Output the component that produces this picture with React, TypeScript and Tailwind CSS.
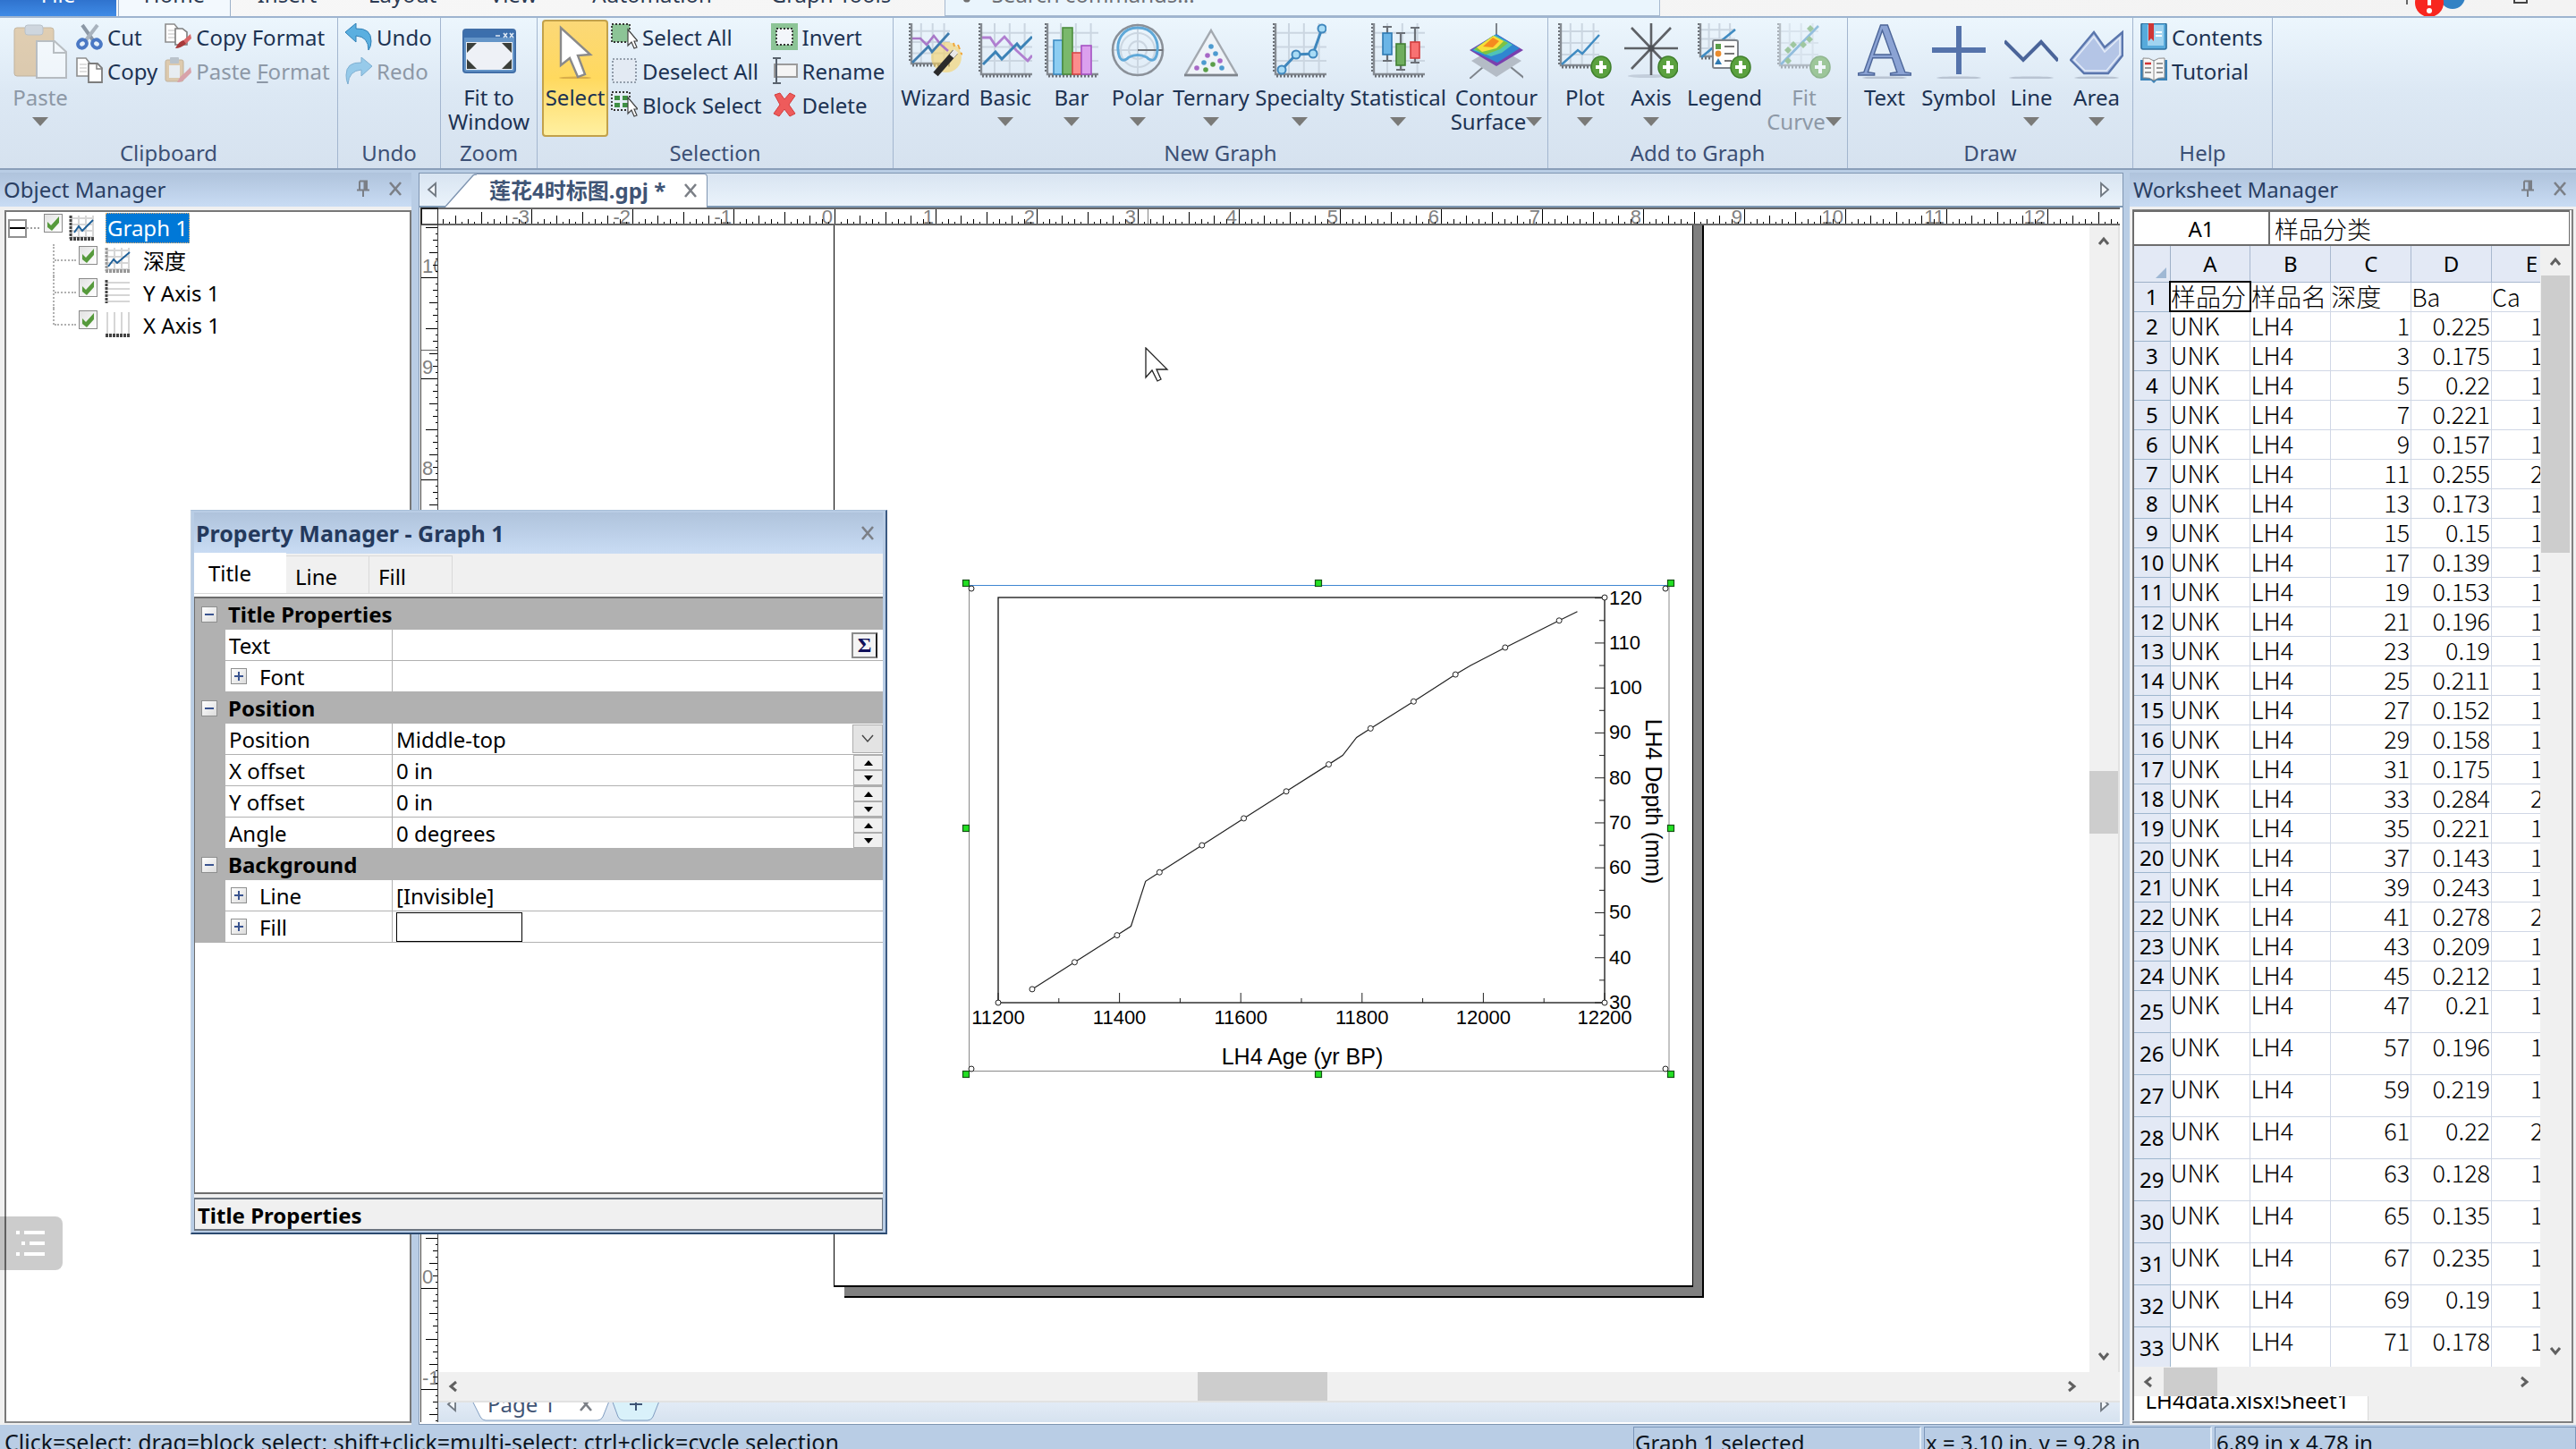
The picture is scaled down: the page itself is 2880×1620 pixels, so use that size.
import { useState, type ReactNode } from 'react';

/* ---------- data ---------- */

const menuTabs = [
  { name: 'Home', width: 'w-[126px]' },
  { name: 'Insert', width: 'w-[126px]' },
  { name: 'Layout', width: 'w-[132px]' },
  { name: 'View', width: 'w-[116px]' },
  { name: 'Automation', width: 'w-[194px]' },
  { name: 'Graph Tools', width: 'w-[206px]' },
];

// [depth, Ba, leading digit of Ca]
const samples: [string, string, string][] = [
  ['1', '0.225', '1'], ['3', '0.175', '1'], ['5', '0.22', '1'], ['7', '0.221', '1'],
  ['9', '0.157', '1'], ['11', '0.255', '2'], ['13', '0.173', '1'], ['15', '0.15', '1'],
  ['17', '0.139', '1'], ['19', '0.153', '1'], ['21', '0.196', '1'], ['23', '0.19', '1'],
  ['25', '0.211', '1'], ['27', '0.152', '1'], ['29', '0.158', '1'], ['31', '0.175', '1'],
  ['33', '0.284', '2'], ['35', '0.221', '1'], ['37', '0.143', '1'], ['39', '0.243', '1'],
  ['41', '0.278', '2'], ['43', '0.209', '1'], ['45', '0.212', '1'], ['47', '0.21', '1'],
  ['57', '0.196', '1'], ['59', '0.219', '1'], ['61', '0.22', '2'], ['63', '0.128', '1'],
  ['65', '0.135', '1'], ['67', '0.235', '1'], ['69', '0.19', '1'], ['71', '0.178', '1'],
];

// [age, depth, has marker]
const curve: [number, number, boolean][] = [
  [11256, 33, true], [11326, 39, true], [11396, 45, true], [11419, 47, false],
  [11443, 57, false], [11466, 59, true], [11536, 65, true], [11605, 71, true],
  [11675, 77, true], [11745, 83, true], [11768, 85, false], [11791, 89, false],
  [11814, 91, true], [11885, 97, true], [11954, 103, true], [11979, 105, false],
  [12036, 109, true], [12125, 115, true], [12155, 117, false],
];

/* ---------- small shared glyphs ---------- */

const CloseGlyph = () => (
  <svg width="16" height="16" viewBox="0 0 16 16">
    <path d="M2 1 L14 15 M14 1 L2 15" stroke="#7b7f86" strokeWidth="2.6" fill="none" />
  </svg>
);

const PinGlyph = () => (
  <svg width="16" height="20" viewBox="0 0 16 20">
    <path d="M4 1.5 H12 V11 M4 1.5 V11 M1 11.5 H15 M8 12 V19" stroke="#7b7f86" strokeWidth="2" fill="none" />
    <path d="M10 2 V11" stroke="#7b7f86" strokeWidth="3" />
  </svg>
);

const chevrons = {
  up: 'M3 11 L8 5 L13 11',
  down: 'M3 5 L8 11 L13 5',
  left: 'M11 3 L5 8 L11 13',
  right: 'M5 3 L11 8 L5 13',
};

const Chevron = ({ dir }: { dir: keyof typeof chevrons }) => (
  <svg width="16" height="16" viewBox="0 0 16 16">
    <path d={chevrons[dir]} stroke="#606060" strokeWidth="3" fill="none" />
  </svg>
);

const Triangle = ({ dir }: { dir: 'left' | 'right' }) => (
  <svg width="12" height="18" viewBox="0 0 12 18">
    <path d={dir === 'left' ? 'M10 2 V16 L2 9 Z' : 'M2 2 V16 L10 9 Z'} fill="#f4f8fc" stroke="#6f7780" strokeWidth="1.8" />
  </svg>
);

const DropArrow = () => (
  <svg width="18" height="10" viewBox="0 0 18 10">
    <path d="M0 0 H18 L9 10 Z" fill="#7a7a78" />
  </svg>
);

/* ---------- ribbon icons, small (30x30) ---------- */

const Small = ({ children, faded }: { children: ReactNode; faded?: boolean }) => (
  <svg width="30" height="30" viewBox="0 0 30 30" className={faded ? 'shrink-0 opacity-55' : 'shrink-0'}>
    {children}
  </svg>
);

const Sheets = () => (
  <>
    <path d="M1 1 H11 L15 6 V21 H1 Z" fill="#fff" stroke="#8d8d8d" strokeWidth="1.6" />
    <path d="M4 8 H12 M4 12 H12 M4 16 H12" stroke="#d5d5d5" strokeWidth="1.4" />
  </>
);

const CutIcon = () => (
  <Small>
    <path d="M7 2 L19 19" stroke="#8b97a5" strokeWidth="4" />
    <path d="M24 2 L11 19" stroke="#a9b3be" strokeWidth="4" />
    <ellipse cx="7" cy="23" rx="5" ry="4.5" fill="none" stroke="#4a78c4" strokeWidth="4" transform="rotate(-35 7 23)" />
    <ellipse cx="23" cy="23" rx="5" ry="4.5" fill="none" stroke="#4a78c4" strokeWidth="4" transform="rotate(35 23 23)" />
  </Small>
);

const CopyIcon = () => (
  <Small>
    <Sheets />
    <path d="M14 7 H24 L29 12 V28 H14 Z" fill="#fff" stroke="#7d7d7d" strokeWidth="1.8" />
    <path d="M23 7 V13 H29" fill="none" stroke="#7d7d7d" strokeWidth="1.4" />
  </Small>
);

const CopyFormatIcon = () => (
  <Small>
    <Sheets />
    <path d="M12 6 H20 L25 10 V24 H12 Z" fill="#fff" stroke="#7d7d7d" strokeWidth="1.6" />
    <path d="M20 20 L29 12 L30 17 L23 24 Z" fill="#d9686a" />
    <path d="M12 28 Q16 20 21 19 L24 23 Q18 28 12 28 Z" fill="#a8393a" />
  </Small>
);

const PasteFormatIcon = () => (
  <Small faded>
    <rect x="1" y="3" width="20" height="24" rx="2" fill="#d9ae74" stroke="#a88350" />
    <rect x="6" y="0" width="10" height="7" rx="1" fill="#9aa0a8" />
    <rect x="5" y="9" width="12" height="14" fill="#eee" />
    <path d="M14 28 Q18 20 22 18 L29 11 L30 17 L23 24 Q19 28 14 28 Z" fill="#d2676c" />
  </Small>
);

const UndoIcon = () => (
  <Small>
    <path d="M0 10 L12 0 V6 Q29 5 29 20 Q29 26 26 30 Q26 15 12 14 V21 Z" fill="#5aafe0" stroke="#2f7fb5" />
  </Small>
);

const RedoIcon = () => (
  <Small faded>
    <path d="M30 10 L18 0 V6 Q1 5 1 20 Q1 26 3 30 Q4 15 18 14 V21 Z" fill="#5aafe0" stroke="#2f7fb5" />
  </Small>
);

const MiniCursor = () => (
  <path d="M19 7 V25 L23 21 L26 28 L29 27 L26 20 L30 20 Z" fill="#fff" stroke="#444" strokeWidth="1.2" />
);

const SelectAllIcon = () => (
  <Small>
    <rect x="1" y="1" width="20" height="20" fill="#8cc496" stroke="#333" strokeWidth="1.8" strokeDasharray="2 2" />
    <MiniCursor />
  </Small>
);

const DeselectAllIcon = () => (
  <Small>
    <rect x="2" y="2" width="26" height="26" fill="#e3eaf3" stroke="#7b8694" strokeWidth="1.6" strokeDasharray="2 2" />
  </Small>
);

const BlockSelectIcon = () => (
  <Small>
    <rect x="1" y="1" width="20" height="20" fill="#e4ecf4" stroke="#333" strokeWidth="1.8" strokeDasharray="2 2" />
    <path d="M4 5 H10 V10 H4 Z M13 5 H19 V10 H13 Z M4 13 H10 V18 H4 Z M13 13 H19 V18 H13 Z" fill="#3f8f43" />
    <MiniCursor />
  </Small>
);

const InvertIcon = () => (
  <Small>
    <rect x="0" y="0" width="30" height="30" fill="#8cc496" />
    <rect x="6" y="6" width="18" height="18" fill="#f3f6fa" stroke="#333" strokeWidth="1.8" strokeDasharray="2 2" />
  </Small>
);

const RenameIcon = () => (
  <Small>
    <rect x="4" y="8" width="25" height="14" fill="#f4f4f4" stroke="#9b9b9b" strokeWidth="2" />
    <path d="M2 1 H11 M2 29 H11 M6 1 V29" stroke="#59626d" strokeWidth="2" />
  </Small>
);

const DeleteIcon = () => (
  <Small>
    <path d="M4 4 L10 2 L15 9 L21 2 L27 5 L20 15 L27 25 L21 28 L15 20 L9 28 L3 25 L10 15 Z" fill="#ee5b5b" stroke="#d23c3c" />
  </Small>
);

const ContentsIcon = () => (
  <Small>
    <rect x="1" y="0" width="28" height="29" rx="2" fill="#57aadb" stroke="#2c6f9e" strokeWidth="1.6" />
    <rect x="8" y="2" width="18" height="23" fill="#9fd3f0" />
    <path d="M9 0 H15 V20 L12 17 L9 20 Z" fill="#cf3535" />
    <path d="M17 10 H24 M17 14 H24" stroke="#fff" strokeWidth="1.8" />
  </Small>
);

const TutorialIcon = () => (
  <Small>
    <path d="M0 3 V26 H12 L15 29 L18 26 H30 V3 Z" fill="#3a82b8" />
    <path d="M3 1 Q10 0 15 4 Q20 0 27 1 V23 Q20 22 15 26 Q10 22 3 23 Z" fill="#f7f7f7" stroke="#8a8a8a" />
    <path d="M15 4 V26" stroke="#8a8a8a" />
    <path d="M5 7 H12" stroke="#cf3535" strokeWidth="2.5" />
    <path d="M5 12 H12 M5 17 H12 M18 7 H25 M18 12 H25 M18 17 H25" stroke="#777" strokeWidth="1.6" />
  </Small>
);

/* ---------- ribbon icons, large (60x62) ---------- */

const Large = ({ children, faded }: { children: ReactNode; faded?: boolean }) => (
  <svg width="60" height="62" viewBox="0 0 60 62" className={faded ? 'opacity-50' : ''}>
    {children}
  </svg>
);

const Axes = ({ w = 60, h = 60 }: { w?: number; h?: number }) => (
  <>
    <path
      d={`M${w * 0.3} 0 V${h - 4} M${w * 0.58} 0 V${h - 4} M${w * 0.86} 0 V${h - 4} M3 ${h * 0.18} H${w} M3 ${h * 0.44} H${w} M3 ${h * 0.7} H${w}`}
      stroke="#cbd6e1"
      strokeWidth="2"
    />
    <path d={`M3 0 V${h - 3} H${w}`} fill="none" stroke="#858b92" strokeWidth="2.4" />
    <path d={`M1 0 V${h - 4}`} stroke="#6c7178" strokeWidth="2" strokeDasharray="2 2" />
    <path d={`M4 ${h - 1} H${w}`} stroke="#6c7178" strokeWidth="3" strokeDasharray="2 2" />
  </>
);

const AddBadge = ({ x = 48, y = 49 }: { x?: number; y?: number }) => (
  <>
    <ellipse cx={x} cy={y} rx="11" ry="12" fill="#5ba13f" stroke="#3f7f2b" strokeWidth="1.5" />
    <path d={`M${x - 6} ${y} H${x + 6} M${x} ${y - 7} V${y + 7}`} stroke="#fff" strokeWidth="4" />
  </>
);

const PasteIcon = () => (
  <Large faded>
    <rect x="1" y="5" width="44" height="54" rx="3" fill="#d8a96a" stroke="#a07a48" />
    <rect x="13" y="2" width="20" height="11" rx="3" fill="#b5bac2" stroke="#8a9099" />
    <path d="M26 20 H46 L59 32 V61 H26 Z" fill="#fff" stroke="#8d8d8d" strokeWidth="2" />
    <path d="M45 20 V33 H59" fill="none" stroke="#8d8d8d" strokeWidth="2" />
  </Large>
);

const FitWindowIcon = () => (
  <Large>
    <rect x="1" y="7" width="58" height="48" rx="3" fill="#6495c8" stroke="#416fa8" strokeWidth="2" />
    <rect x="2" y="8" width="56" height="8" fill="#3c6fad" />
    <path d="M37 14 H42 M46 11 L50 16 M50 11 L46 16 M53 11 L57 16 M57 11 L53 16" stroke="#dfe9f4" strokeWidth="1.6" />
    <rect x="4" y="21" width="52" height="31" fill="#eef1f6" />
    <path d="M5 22 H16 L5 33 Z M55 22 H44 L55 33 Z M5 51 H16 L5 40 Z M55 51 H44 L55 40 Z" fill="#3b3f3a" />
  </Large>
);

const SelectIcon = () => (
  <Large>
    <ellipse cx="30" cy="61" rx="18" ry="1.5" fill="#d9ad4a" />
    <path d="M14 5 V47 L24 39 L33 60 L41 57 L33 36 L47 35 Z" fill="#fff" stroke="#8a8a8a" strokeWidth="2.4" />
  </Large>
);

const WizardIcon = () => (
  <Large>
    <Axes w={46} h={48} />
    <ellipse cx="42" cy="38" rx="17" ry="17" fill="#f6d264" opacity="0.6" />
    <path d="M4 17 H13 L20 24 L28 14 L36 24 L44 31" fill="none" stroke="#a878c8" strokeWidth="2.6" />
    <path d="M4 44 L22 26 L26 32 L45 11" fill="none" stroke="#3f7cae" strokeWidth="2.8" />
    <path d="M30 57 L52 32" stroke="#2b2b2b" strokeWidth="7" />
    <path d="M48 37 L53 31" stroke="#e8e8e8" strokeWidth="6" />
    <path d="M55 24 L57 29 M50 22 L51 26 M58 33 L60 35" stroke="#f0a63a" strokeWidth="2" />
  </Large>
);

const BasicIcon = () => (
  <Large>
    <Axes />
    <path d="M4 16 H13 L19 25 L29 15 L42 30 L55 42 L60 36" fill="none" stroke="#b07fd0" strokeWidth="2.8" />
    <path d="M5 46 L19 32 L26 40 L43 23 L47 28 L60 15" fill="none" stroke="#3b82b6" strokeWidth="3" />
  </Large>
);

const BarIcon = () => (
  <Large>
    <Axes />
    <rect x="10" y="19" width="10" height="38" fill="#8ccdf2" stroke="#3d8cc4" strokeWidth="1.6" />
    <rect x="20" y="5" width="11" height="52" fill="#7ab86c" stroke="#4b8d3d" strokeWidth="1.6" />
    <rect x="31" y="33" width="10" height="24" fill="#fb8d8d" stroke="#d84646" strokeWidth="1.6" />
    <rect x="41" y="25" width="11" height="32" fill="#dba0ee" stroke="#a552c4" strokeWidth="1.6" />
  </Large>
);

const PolarIcon = () => (
  <Large>
    <path d="M2 30 H58 M30 2 V58" stroke="#cbd6e1" strokeWidth="2" />
    <circle cx="30" cy="30" r="10" fill="none" stroke="#cbd6e1" strokeWidth="2" />
    <circle cx="30" cy="30" r="19" fill="none" stroke="#cbd6e1" strokeWidth="2" />
    <circle cx="30" cy="30" r="28" fill="none" stroke="#8a9098" strokeWidth="2.6" />
    <path d="M30 30 H58" stroke="#6c7178" strokeWidth="2" />
    <path d="M30 5 C48 5 53 20 52 30 C51 42 46 44 40 38 Q30 33 20 38 C14 44 9 42 8 30 C7 20 12 5 30 5 Z" fill="none" stroke="#5fa8d8" strokeWidth="3" />
  </Large>
);

const ternaryDots: [number, number, string][] = [
  [30, 26, '#4d9bd0'], [26, 36, '#a768c6'], [35, 34, '#4d9bd0'], [22, 44, '#4d9bd0'], [32, 46, '#5a9e48'],
  [40, 42, '#a768c6'], [14, 50, '#a768c6'], [24, 52, '#5a9e48'], [42, 50, '#4d9bd0'],
];

const TernaryIcon = () => (
  <Large>
    <path d="M30 8 L59 58 H1 Z" fill="#eef3f8" stroke="#a3a9b0" strokeWidth="2.4" />
    <path d="M0 58 H60" stroke="#7e848b" strokeWidth="2.4" />
    {ternaryDots.map(([x, y, color]) => (
      <circle key={`${x}-${y}`} cx={x} cy={y} r="2.8" fill={color} />
    ))}
  </Large>
);

const SpecialtyIcon = () => (
  <Large>
    <Axes />
    <path d="M10 52 L26 35 L45 34 L55 6" fill="none" stroke="#3f87bd" strokeWidth="3" />
    {[[10, 52], [26, 35], [45, 34], [55, 6]].map(([x, y]) => (
      <circle key={x} cx={x} cy={y} r="4.5" fill="#a9dcf6" stroke="#3f87bd" strokeWidth="2" />
    ))}
  </Large>
);

const StatisticalIcon = () => (
  <Large>
    <Axes />
    <path d="M18 4 V42 M13 4 H23 M13 42 H23 M33 11 V52 M28 11 H38 M28 52 H38 M49 5 V44 M44 5 H54 M44 44 H54" stroke="#6c7178" strokeWidth="2.2" />
    <rect x="13" y="11" width="10" height="24" fill="#6bb5e6" stroke="#2f7ab2" strokeWidth="1.6" />
    <rect x="28" y="23" width="10" height="24" fill="#6fae5e" stroke="#427f34" strokeWidth="1.6" />
    <rect x="44" y="21" width="10" height="18" fill="#f87272" stroke="#d23c3c" strokeWidth="1.6" />
  </Large>
);

const ContourIcon = () => (
  <Large>
    <path d="M30 0 V14 M30 36 L0 62 M30 36 L62 62" stroke="#7e848b" strokeWidth="2" />
    <path d="M30 26 L58 42 L30 60 L2 42 Z" fill="#b4bcc6" />
    <path d="M30 12 L60 30 L30 48 L0 30 Z" fill="#7a3fae" />
    <path d="M30 12 L56 28 L31 44 L2 30 Z" fill="#2f86d0" />
    <path d="M28 13 L48 24 L36 33 L24 37 L4 30 Z" fill="#4fc3b8" />
    <path d="M26 14 L43 22 L34 29 L18 35 L5 29 Z" fill="#7cc243" />
    <path d="M27 14 L38 20 L30 28 L14 32 L8 27 Z" fill="#f7df3a" />
    <path d="M26 16 L33 20 L26 27 L15 26 Z" fill="#f58a1f" />
  </Large>
);

const PlotIcon = () => (
  <Large>
    <Axes w={46} h={50} />
    <path d="M4 46 L22 30 L27 34 L46 13" fill="none" stroke="#3f8bc2" strokeWidth="2.4" />
    <AddBadge />
  </Large>
);

const AxisIcon = () => (
  <Large>
    <ellipse cx="26" cy="59" rx="22" ry="2" fill="#c3cedb" />
    <path d="M30 0 V58 M0 28 H60 M8 5 L52 51 M52 5 L8 51" stroke="#5e6166" strokeWidth="2.6" />
    <circle cx="30" cy="28" r="3.5" fill="#4c4f54" />
    <AddBadge x={49} />
  </Large>
);

const LegendIcon = () => (
  <Large>
    <Axes w={42} h={40} />
    <path d="M4 38 L42 7" stroke="#3f8bc2" strokeWidth="2.6" />
    <rect x="17" y="19" width="28" height="31" rx="2" fill="#fdfdfd" stroke="#7e848b" strokeWidth="2" />
    <rect x="20" y="23" width="6" height="6" fill="#5a9e48" />
    <circle cx="23" cy="34" r="3.4" fill="#ea8c2e" />
    <path d="M23 39 L27 46 H19 Z" fill="#2f7ab2" />
    <path d="M30 26 H41 M30 34 H41 M30 42 H38" stroke="#777" strokeWidth="2" />
    <AddBadge />
  </Large>
);

const FitCurveIcon = () => (
  <Large faded>
    <Axes w={46} h={50} />
    <path d="M4 46 L46 3" stroke="#3f8bc2" strokeWidth="2.6" />
    <path
      d="M12 26 l4 4 l-4 4 l-4 -4 Z M18 20 l4 4 l-4 4 l-4 -4 Z M29 20 l4 4 l-4 4 l-4 -4 Z M36 14 l4 4 l-4 4 l-4 -4 Z M12 38 l4 4 l-4 4 l-4 -4 Z M37 2 l4 4 l-4 4 l-4 -4 Z"
      fill="#5a9e48"
    />
    <AddBadge />
  </Large>
);

const IconShadow = () => <ellipse cx="30" cy="61" rx="25" ry="1.6" fill="#b9c4d2" />;

const TextIcon = () => (
  <Large>
    <IconShadow />
    <text x="30" y="58" textAnchor="middle" fontSize="84" fontFamily="Liberation Serif, serif" fill="#8ba3d4" stroke="#4d6699" strokeWidth="1.4">
      A
    </text>
  </Large>
);

const SymbolIcon = () => (
  <Large>
    <IconShadow />
    <path d="M30 3 V57 M0 30 H60" stroke="#5573ab" strokeWidth="6" />
  </Large>
);

const LineIcon = () => (
  <Large>
    <IconShadow />
    <path d="M0 20 L21 41 L41 21 L60 42" fill="none" stroke="#4a6499" strokeWidth="4" />
  </Large>
);

const AreaIcon = () => (
  <Large>
    <IconShadow />
    <path d="M1 41 L27 10 L39 27 L59 10 V36 L43 56 H16 Z" fill="#b4c5e6" stroke="#5a76ad" strokeWidth="2.4" />
    <path d="M5 41 L27 15 L39 32 L56 16 V35 L41 53 H17 Z" fill="none" stroke="#e3ebf8" strokeWidth="1.6" />
  </Large>
);

/* ---------- ribbon ---------- */

interface BigButtonProps {
  icon: ReactNode;
  label: string;
  width: string;
  second?: string;
  drop?: boolean;
  disabled?: boolean;
  active?: boolean;
}

const BigButton = ({ icon, label, width, second, drop, disabled, active }: BigButtonProps) => (
  <button
    disabled={disabled}
    className={`flex flex-col items-center whitespace-nowrap leading-[27px] ${width} ${disabled ? 'text-[#8d98a6]' : ''} ${
      active
        ? 'mt-[2px] h-[131px] rounded border-2 border-[#c2a14b] bg-linear-to-b from-[#fbd877] via-[#ffd95e] to-[#fff0a0] pt-[2px]'
        : 'pt-[6px]'
    }`}
  >
    {icon}
    <span className="mt-[7px]">{label}</span>
    {second && (
      <span className="flex items-center">
        {second}
        {drop && <DropArrow />}
      </span>
    )}
    {drop && !second && (
      <span className="flex h-[27px] items-center">
        <DropArrow />
      </span>
    )}
  </button>
);

const SmallButton = ({ icon, label, disabled }: { icon: ReactNode; label: ReactNode; disabled?: boolean }) => (
  <button disabled={disabled} className={`flex h-[38px] items-center gap-[5px] whitespace-nowrap ${disabled ? 'text-[#8d98a6]' : ''}`}>
    {icon}
    <span>{label}</span>
  </button>
);

const Group = ({ name, width, children }: { name: string; width: string; children: ReactNode }) => (
  <section className={`flex shrink-0 flex-col border-r border-[#a3b6cf] ${width}`}>
    <div className="flex flex-1 items-start">{children}</div>
    <div className="h-[34px] text-center leading-[34px] text-[#3c5075]">{name}</div>
  </section>
);

const Ribbon = () => (
  <header className="shrink-0 text-[#1c3252]">
    <nav className="flex h-[18px] items-end overflow-hidden bg-linear-to-r from-[#f7f7f7] to-[#f3f3f3] leading-[33px] text-[#2c3a52]">
      <button className="h-[41px] w-[130px] shrink-0 bg-linear-to-b from-[#1d55b0] to-[#3f8be6] pb-2 text-white">File</button>
      {menuTabs.map((tab, i) => (
        <button
          key={tab.name}
          className={`h-[41px] shrink-0 pb-2 ${tab.width} ${i === 0 ? 'ml-0.5 border-x border-[#9db1c9] bg-[#f3f9fe]' : ''}`}
        >
          {tab.name}
        </button>
      ))}
      <label className="ml-[24px] flex h-[42px] w-[800px] shrink-0 items-center gap-6 border border-[#a7b9cf] bg-[#eaf5fd] pb-2 pl-[20px]">
        <svg width="8" height="34" viewBox="0 0 8 34">
          <rect width="8" height="27" rx="4" fill="#707070" />
        </svg>
        <input aria-label="Search commands" placeholder="Search commands..." className="w-full outline-none placeholder:text-[#6d7076]" />
      </label>
      <div className="ml-auto mr-[26px] flex h-[18px] items-start gap-1">
        <span className="h-[5px] w-0.5 bg-[#666]" />
        <svg width="60" height="19" viewBox="0 0 60 19">
          <circle cx="46" cy="-4" r="14" fill="#3382c4" />
          <circle cx="20" cy="3" r="16" fill="#f8261f" />
          <rect x="18" y="-6" width="4" height="12" fill="#fff" />
          <circle cx="20" cy="12" r="3" fill="#fff" />
        </svg>
        <button aria-label="Maximize" className="ml-[50px] h-1 w-4 border-2 border-t-0 border-[#444]" />
        <span className="w-6" />
      </div>
    </nav>
    <div className="flex h-[172px] border-y-2 border-t-[#9eb4cf] border-b-[#8a9fb9] bg-linear-to-b from-[#ecf6fd] via-[#dce8f4] to-[#d6e2ef]">
      <Group name="Clipboard" width="w-[378px]">
        <BigButton icon={<PasteIcon />} label="Paste" width="w-[60px] ml-[15px]" drop disabled />
        <div className="ml-[10px] pt-[2px]">
          <SmallButton icon={<CutIcon />} label="Cut" />
          <SmallButton icon={<CopyIcon />} label="Copy" />
        </div>
        <div className="ml-[8px] pt-[2px]">
          <SmallButton icon={<CopyFormatIcon />} label="Copy Format" />
          <SmallButton icon={<PasteFormatIcon />} label={<>Paste <u>F</u>ormat</>} disabled />
        </div>
      </Group>
      <Group name="Undo" width="w-[115px]">
        <div className="ml-[8px] pt-[2px]">
          <SmallButton icon={<UndoIcon />} label="Undo" />
          <SmallButton icon={<RedoIcon />} label="Redo" disabled />
        </div>
      </Group>
      <Group name="Zoom" width="w-[108px]">
        <BigButton icon={<FitWindowIcon />} label="Fit to" second="Window" width="w-[108px]" />
      </Group>
      <Group name="Selection" width="w-[398px]">
        <BigButton icon={<SelectIcon />} label="Select" width="w-[74px] ml-[5px]" active />
        <div className="ml-[3px] pt-[2px]">
          <SmallButton icon={<SelectAllIcon />} label="Select All" />
          <SmallButton icon={<DeselectAllIcon />} label="Deselect All" />
          <SmallButton icon={<BlockSelectIcon />} label="Block Select" />
        </div>
        <div className="ml-[10px] pt-[2px]">
          <SmallButton icon={<InvertIcon />} label="Invert" />
          <SmallButton icon={<RenameIcon />} label="Rename" />
          <SmallButton icon={<DeleteIcon />} label="Delete" />
        </div>
      </Group>
      <Group name="New Graph" width="w-[732px]">
        <BigButton icon={<WizardIcon />} label="Wizard" width="w-[84px] ml-[5px]" />
        <BigButton icon={<BasicIcon />} label="Basic" width="w-[72px]" drop />
        <BigButton icon={<BarIcon />} label="Bar" width="w-[76px]" drop />
        <BigButton icon={<PolarIcon />} label="Polar" width="w-[72px]" drop />
        <BigButton icon={<TernaryIcon />} label="Ternary" width="w-[92px]" drop />
        <BigButton icon={<SpecialtyIcon />} label="Specialty" width="w-[106px]" drop />
        <BigButton icon={<StatisticalIcon />} label="Statistical" width="w-[114px]" drop />
        <BigButton icon={<ContourIcon />} label="Contour" second="Surface" width="w-[106px]" drop />
      </Group>
      <Group name="Add to Graph" width="w-[335px]">
        <BigButton icon={<PlotIcon />} label="Plot" width="w-[72px] ml-[5px]" drop />
        <BigButton icon={<AxisIcon />} label="Axis" width="w-[76px]" drop />
        <BigButton icon={<LegendIcon />} label="Legend" width="w-[88px]" />
        <BigButton icon={<FitCurveIcon />} label="Fit" second="Curve" width="w-[90px]" drop disabled />
      </Group>
      <Group name="Draw" width="w-[319px]">
        <BigButton icon={<TextIcon />} label="Text" width="w-[74px] ml-[4px]" />
        <BigButton icon={<SymbolIcon />} label="Symbol" width="w-[92px]" />
        <BigButton icon={<LineIcon />} label="Line" width="w-[70px]" drop />
        <BigButton icon={<AreaIcon />} label="Area" width="w-[76px]" drop />
      </Group>
      <Group name="Help" width="w-[156px]">
        <div className="ml-[8px] pt-[2px]">
          <SmallButton icon={<ContentsIcon />} label="Contents" />
          <SmallButton icon={<TutorialIcon />} label="Tutorial" />
        </div>
      </Group>
    </div>
  </header>
);

/* ---------- object manager ---------- */

const PanelTitle = ({ title }: { title: string }) => (
  <div className="flex h-[38px] shrink-0 items-center gap-5 bg-linear-to-b from-[#afc3dc] to-[#c9dcf4] pb-[2px] pl-[4px] pr-[10px] text-[#2a3f63]">
    <h2 className="mr-auto">{title}</h2>
    <button aria-label={`Pin ${title}`}><PinGlyph /></button>
    <button aria-label={`Close ${title}`}><CloseGlyph /></button>
  </div>
);

const treeIcons = {
  graph: 'M7 20 L12 13 L16 18 L28 6',
  plot: 'M5 22 L11 14 L15 18 L29 6',
};

const TreeIcon = ({ kind }: { kind: 'graph' | 'plot' | 'y' | 'x' }) => (
  <svg width="32" height="30" viewBox="0 0 32 30">
    {kind !== 'x' && <path d="M3 4 H29 M3 11 H29 M3 18 H29 M3 25 H29" stroke="#d6d6d6" strokeWidth="2" />}
    {kind !== 'y' && <path d="M4 1 V25 M12 1 V25 M20 1 V25 M28 1 V25" stroke="#d6d6d6" strokeWidth="2" />}
    {kind !== 'x' && <path d="M3 1 V27" stroke={kind === 'plot' ? '#999' : '#444'} strokeWidth="3" strokeDasharray="3 1" />}
    {kind !== 'y' && <path d="M2 27 H30" stroke={kind === 'plot' ? '#999' : '#444'} strokeWidth="4" strokeDasharray="3 1" />}
    {(kind === 'graph' || kind === 'plot') && <path d={treeIcons[kind]} fill="none" stroke="#1f6098" strokeWidth="2" />}
  </svg>
);

const TreeCheck = ({ label }: { label: string }) => (
  <span className="mb-3 grid">
    <input
      type="checkbox"
      defaultChecked
      aria-label={`Show ${label}`}
      className="peer col-start-1 row-start-1 size-[21px] appearance-none border border-[#8a8a8a] bg-linear-to-br from-[#e2e2e2] to-white"
    />
    <svg width="21" height="21" viewBox="0 0 21 21" className="pointer-events-none invisible col-start-1 row-start-1 peer-checked:visible">
      <path d="M4 9 L8 13 L17 3 V10 L9 19 L4 15 Z" fill="#569a3c" />
    </svg>
  </span>
);

const treeChildren: { label: string; kind: 'plot' | 'y' | 'x' }[] = [
  { label: '深度', kind: 'plot' },
  { label: 'Y Axis 1', kind: 'y' },
  { label: 'X Axis 1', kind: 'x' },
];

const ObjectManager = () => (
  <aside className="flex w-[460px] shrink-0 flex-col bg-[#f0f0f0]">
    <PanelTitle title="Object Manager" />
    <div className="m-[5px] mt-[4px] mr-0 mb-0.5 flex-1 border-2 border-[#787878] border-b-[#8a8a8a] bg-white">
      <ul>
        <li>
          <div className="flex h-9 items-center pl-[2px]">
            <button aria-label="Collapse Graph 1" className="flex size-[21px] items-center justify-center border-2 border-[#919191]">
              <span className="h-0.5 w-[17px] bg-black" />
            </button>
            <span className="mr-[5px] w-[14px] border-t-2 border-dotted border-[#a0a0a0]" />
            <TreeCheck label="Graph 1" />
            <span className="mx-[6px]"><TreeIcon kind="graph" /></span>
            <button className="ml-[4px] h-[34px] border border-dotted border-[#f0b060] bg-[#0078d7] px-px leading-8 text-white">Graph 1</button>
          </div>
          <ul className="ml-[52px]">
            {treeChildren.map((node, i) => (
              <li key={node.label} className="flex h-9 items-center">
                <span className={`self-start border-l-2 border-dotted border-[#b0b0b0] ${i === 2 ? 'h-[18px]' : 'h-9'}`} />
                <span className="w-6 border-t-2 border-dotted border-[#b0b0b0]" />
                <span className="ml-[3px]"><TreeCheck label={node.label} /></span>
                <span className="ml-[7px] mr-[12px]"><TreeIcon kind={node.kind} /></span>
                <span className="text-black">{node.label}</span>
              </li>
            ))}
          </ul>
        </li>
      </ul>
    </div>
  </aside>
);

/* ---------- rulers ---------- */

const INCH = 113;

// tick length by sixteenth of an inch
const tickLength = (i: number) => {
  const n = ((i % 16) + 16) % 16;
  if (n === 0) return 18;
  if (n === 8) return 13;
  if (n % 4 === 0) return 9;
  if (n % 2 === 0) return 5;
  return 2;
};

const range = (from: number, to: number) => Array.from({ length: to - from + 1 }, (_, i) => from + i);

const HorizontalRuler = () => (
  <svg className="h-4 w-full overflow-hidden" shapeRendering="crispEdges">
    {range(-3, 13).map((n) => (
      <text key={n} x={441 + n * INCH} y="16" textAnchor="end" fontSize="22" fill="#808080" fontFamily="Liberation Sans, sans-serif">
        {n}
      </text>
    ))}
    {range(-62, 203).map((i) => {
      const x = Math.round(443 + (i * INCH) / 16);
      return <path key={i} d={`M${x}.5 ${16 - tickLength(i)} V16`} stroke="#000" />;
    })}
    <path d="M793.5 0 V16" stroke="#888" />
  </svg>
);

const VerticalRuler = () => (
  <svg className="h-full w-full overflow-hidden" shapeRendering="crispEdges">
    {range(-1, 10).map((n) => (
      <text key={n} x="1" y={1183 - n * INCH} fontSize="22" fill="#808080" fontFamily="Liberation Sans, sans-serif">
        {n}
      </text>
    ))}
    {range(-21, 168).map((i) => {
      const y = Math.round(1188 - (i * INCH) / 16);
      return <path key={i} d={`M${18 - tickLength(i)} ${y}.5 H18`} stroke="#000" />;
    })}
    <path d="M0 139.5 H18" stroke="#666" />
  </svg>
);

/* ---------- graph ---------- */

const px = (age: number) => 46 + (age - 11200) * 0.678;
const py = (depth: number) => 481 - (depth - 30) * 5.026;

const Ring = ({ x, y }: { x: number; y: number }) => <circle cx={x} cy={y} r="3" fill="#fff" stroke="#222" />;

const Graph = () => (
  <svg width="810" height="570" viewBox="0 0 810 570" fontFamily="Liberation Sans, sans-serif" className="absolute left-[580px] top-[388px]">
    <path d="M13.5 558 V14 M796 14 V558 M13 557.5 H796" fill="none" stroke="#8a8a8a" />
    <path d="M13 14.5 H796" stroke="#3f87d2" />
    <rect x="46" y="28" width="678" height="453" fill="none" stroke="#111" strokeWidth="1.3" />

    {range(0, 10).map((i) => (
      <path key={i} d={`M${px(11200 + i * 100)} 481 v${i % 2 === 0 ? -11 : -5}`} stroke="#222" />
    ))}
    {range(0, 18).map((i) => (
      <path key={i} d={`M724 ${py(30 + i * 5)} h${i % 2 === 0 ? -11 : -6}`} stroke="#222" />
    ))}
    {range(0, 5).map((i) => (
      <text key={i} x={px(11200 + i * 200)} y="505" fontSize="22" textAnchor="middle">{11200 + i * 200}</text>
    ))}
    {range(3, 12).map((i) => (
      <text key={i} x="729" y={py(i * 10) + 7} fontSize="22">{i * 10}</text>
    ))}

    <polyline points={curve.map(([age, depth]) => `${px(age)},${py(depth)}`).join(' ')} fill="none" stroke="#222" strokeWidth="1.2" />
    {curve.filter((p) => p[2]).map(([age, depth]) => (
      <Ring key={age} x={px(age)} y={py(depth)} />
    ))}
    {[[16, 18], [792, 18], [16, 555], [792, 555], [724, 28], [46, 481], [724, 481]].map(([x, y]) => (
      <Ring key={`${x}-${y}`} x={x} y={y} />
    ))}

    <text x="386" y="550" fontSize="25" textAnchor="middle">LH4 Age (yr BP)</text>
    <text transform="translate(770 256) rotate(90)" fontSize="25" textAnchor="middle">LH4 Depth (mm)</text>

    {[10, 404, 798].flatMap((x) => [12, 286, 561].map((y) => ({ x, y })))
      .filter(({ x, y }) => !(x === 404 && y === 286))
      .map(({ x, y }) => (
        <rect key={`${x}-${y}`} x={x - 3.5} y={y - 3.5} width="7" height="7" fill="#23e023" stroke="#145214" strokeWidth="1.2" />
      ))}
  </svg>
);

const DocumentArea = () => (
  <main className="mr-[7px] ml-[8px] flex min-w-0 flex-1 flex-col border border-[#7f95b1] bg-white">
    <div className="flex h-[38px] shrink-0 items-center border-b-2 border-[#7f99b4] bg-linear-to-b from-[#d8e4f1] to-[#eaf3fb]">
      <button aria-label="Scroll tabs left" className="ml-[8px]"><Triangle dir="left" /></button>
      <div className="ml-[8px] flex h-[36px] self-end">
        <svg width="36" height="38" viewBox="0 0 36 38">
          <path d="M0 38 L32 2 Q33 1 36 1 V38 Z" fill="#fff" />
          <path d="M0 38 L32 2 Q33 1 36 1" fill="none" stroke="#7f95b1" strokeWidth="1.4" />
        </svg>
        <div className="flex h-[38px] items-center gap-[20px] rounded-tr border-r border-t border-[#7f95b1] bg-white pb-[2px] pl-[14px] pr-[10px] font-bold text-[#3f5475]">
          <span>莲花4时标图.gpj *</span>
          <button aria-label="Close document"><CloseGlyph /></button>
        </div>
      </div>
      <button aria-label="Scroll tabs right" className="ml-auto mr-[14px]"><Triangle dir="right" /></button>
    </div>

    <div className="flex min-h-0 flex-1 flex-col pl-px pr-[3px] pb-0.5">
      <div className="flex h-[20px] shrink-0">
        <div className="w-[20px] shrink-0 border-2 border-r border-[#222] border-b-[#555]" />
        <div className="min-w-0 flex-1 border-y-2 border-[#666]"><HorizontalRuler /></div>
      </div>
      <div className="flex min-h-0 flex-1">
        <div className="w-[20px] shrink-0 border-x border-[#444]"><VerticalRuler /></div>
        <div className="flex min-w-0 flex-1 flex-col">
          <div className="flex min-h-0 flex-1">
            <div className="relative min-w-0 flex-1 overflow-hidden">
              <div className="absolute left-[454px] top-0 h-[1199px] w-[961px] border-b-2 border-r-2 border-black bg-[#808080]" />
              <div className="absolute left-[442px] top-0 h-[1187px] w-[961px] border border-t-0 border-b-2 border-black bg-white" />
              <Graph />
              <svg width="28" height="40" viewBox="0 0 28 40" className="absolute left-[790px] top-[136px]">
                <path d="M1 1 V34 L8 26 L14 38 L18 36 L13 25 L25 25 Z" fill="#fff" stroke="#222" strokeWidth="1.3" />
              </svg>
            </div>
            <div className="flex w-[34px] flex-col items-center justify-between border-r-2 border-[#e2e2e2] bg-[#f0f0f0] py-[10px]">
              <button aria-label="Scroll up"><Chevron dir="up" /></button>
              <div className="mt-[8px] h-[70px] w-[32px] bg-[#cdcdcd]" />
              <button aria-label="Scroll down"><Chevron dir="down" /></button>
            </div>
          </div>
          <div className="flex h-[34px] shrink-0 items-center border-b-2 border-[#e2e2e2] bg-[#f0f0f0] pl-[9px]">
            <button aria-label="Scroll left"><Chevron dir="left" /></button>
            <div className="mx-auto h-[32px] w-[145px] bg-[#cdcdcd]" />
            <button aria-label="Scroll right" className="mr-[46px]"><Chevron dir="right" /></button>
          </div>
          <div className="flex h-[22px] shrink-0 items-end overflow-hidden bg-linear-to-b from-[#e2ebf6] to-[#d6e2ef] text-[#3f5475]">
            <button aria-label="Previous page" className="mb-[11px] ml-[9px]"><Triangle dir="left" /></button>
            <div className="ml-[15px] grid h-[37px] w-[158px] shrink-0">
              <svg width="158" height="37" viewBox="0 0 158 37" className="col-start-1 row-start-1">
                <path d="M-4 1 L11 31 Q13 35 17 35 H142 Q146 35 148 31 L160 1" fill="#fff" stroke="#7f9cc0" />
              </svg>
              <div className="z-10 col-start-1 row-start-1 flex items-center gap-[26px] pb-[9px] pl-[19px]">
                <span>Page 1</span>
                <button aria-label="Close page"><CloseGlyph /></button>
              </div>
            </div>
            <button aria-label="Add page" className="grid h-[37px] w-[54px] shrink-0">
              <svg width="54" height="37" viewBox="0 0 54 37">
                <path d="M-4 1 L7 31 Q9 35 13 35 H40 Q44 35 46 31 L58 1" fill="#d9f1fa" stroke="#7f9cc0" />
                <path d="M27 10 V24 M20 17 H34" stroke="#3f5475" strokeWidth="2" />
              </svg>
            </button>
            <button aria-label="Next page" className="mb-[11px] ml-auto mr-[11px]"><Triangle dir="right" /></button>
          </div>
        </div>
      </div>
    </div>
  </main>
);

/* ---------- worksheet ---------- */

const WorksheetManager = () => (
  <aside className="flex w-[499px] shrink-0 flex-col bg-[#f0f0f0]">
    <PanelTitle title="Worksheet Manager" />
    <div className="mx-[3px] mt-[3px] mb-0.5 flex min-h-0 flex-1 flex-col border border-l-0 border-r-2 border-b-2 border-[#808080] pb-px pr-0.5">
      <div className="flex h-[40px] shrink-0 border-2 border-r border-[#6d6d6d] bg-white text-black">
        <div className="flex w-[152px] items-center justify-center border-r-2 border-[#6d6d6d]">A1</div>
        <input
          aria-label="Cell contents"
          defaultValue="样品分类"
          className="min-w-0 flex-1 pl-[5px] font-['Noto_Sans_CJK_SC',sans-serif] text-[27px] font-light outline-none"
        />
      </div>
      <div className="flex min-h-0 flex-1 border-l-2 border-[#6d6d6d]">
        <div className="flex min-w-0 flex-1 flex-col">
          <div className="min-h-0 flex-1 overflow-hidden bg-white">
            <table className="w-[490px] table-fixed border-collapse text-black">
              <thead className="bg-[#e3e9f5]">
                <tr className="h-[40px]">
                  <th className="w-[40px] border-b border-r border-[#9eb0c8] p-0">
                    <svg width="12" height="12" viewBox="0 0 12 12" className="mt-[20px] ml-[24px]"><path d="M12 0 V12 H0 Z" fill="#9fb8d4" /></svg>
                  </th>
                  {['A', 'B', 'C', 'D', 'E'].map((col) => (
                    <th key={col} className="border-b border-r border-[#a9b9cf] p-0 font-normal">{col}</th>
                  ))}
                </tr>
              </thead>
              <tbody className="font-['Noto_Sans_CJK_SC',sans-serif] text-[27px] font-light leading-[29px]">
                <tr className="h-[33px] whitespace-nowrap">
                  <th className="border-b border-r border-[#9eb6ce] bg-[#e3e9f5] p-0 font-['Noto_Sans',sans-serif] text-[24px] font-normal">1</th>
                  <td className="overflow-hidden border-2 border-black p-0 text-[28px]">样品分</td>
                  <td className="overflow-hidden border border-[#d0d7e5] p-0 text-[28px]">样品名</td>
                  <td className="overflow-hidden border border-[#d0d7e5] p-0 text-[28px]">深度</td>
                  <td className="border border-[#d0d7e5] p-0">Ba</td>
                  <td className="border border-[#d0d7e5] p-0">Ca</td>
                </tr>
                {samples.map(([depth, ba, ca], i) => (
                  <tr key={depth} className={i < 23 ? 'h-[33px]' : 'h-[47px]'}>
                    <th className="border-b border-r border-[#9eb6ce] bg-[#e3e9f5] p-0 font-['Noto_Sans',sans-serif] text-[24px] font-normal">{i + 2}</th>
                    <td className="border border-[#d0d7e5] p-0 align-top">UNK</td>
                    <td className="border border-[#d0d7e5] p-0 align-top">LH4</td>
                    <td className="border border-[#d0d7e5] p-0 pr-px text-right align-top">{depth}</td>
                    <td className="border border-[#d0d7e5] p-0 pr-px text-right align-top">{ba}</td>
                    <td className="border border-[#d0d7e5] p-0 pl-[43px] align-top">{ca}</td>
                  </tr>
                ))}
              </tbody>
            </table>
          </div>
          <div className="flex h-[33px] shrink-0 items-center pl-[8px]">
            <button aria-label="Scroll sheet left"><Chevron dir="left" /></button>
            <div className="ml-[9px] h-[32px] w-[60px] bg-[#cdcdcd]" />
            <button aria-label="Scroll sheet right" className="ml-auto mr-[10px]"><Chevron dir="right" /></button>
          </div>
          <div className="flex h-[27px] shrink-0 items-end overflow-hidden">
            <button className="h-[40px] w-[262px] border-r border-[#d9d9d9] bg-white pr-2 pb-[5px] text-black">LH4data.xlsx!Sheet1</button>
          </div>
        </div>
        <div className="mb-[60px] flex w-[33px] shrink-0 flex-col items-center pt-[10px] pb-[10px]">
          <button aria-label="Scroll sheet up"><Chevron dir="up" /></button>
          <div className="mt-[7px] h-[310px] w-[32px] bg-[#cdcdcd]" />
          <button aria-label="Scroll sheet down" className="mt-auto"><Chevron dir="down" /></button>
        </div>
      </div>
    </div>
  </aside>
);

/* ---------- property manager ---------- */

const Toggle = ({ open, label }: { open?: boolean; label: string }) => (
  <button aria-label={`Toggle ${label}`} className="flex size-[18px] shrink-0 items-center justify-center border border-[#8e8f8f] bg-linear-to-br from-white to-[#dcdcdc]">
    <svg width="12" height="12" viewBox="0 0 12 12">
      <path d={open ? 'M1 6 H11' : 'M1 6 H11 M6 1 V11'} stroke="#3a5490" strokeWidth="2" />
    </svg>
  </button>
);

const SectionRow = ({ name }: { name: string }) => (
  <div className="flex h-[35px] items-center gap-[12px] bg-[#b1b1b1] pl-[7px]">
    <Toggle open label={name} />
    <h3 className="font-bold">{name}</h3>
  </div>
);

interface FieldRowProps {
  label: string;
  id?: string;
  expandable?: boolean;
  children?: ReactNode;
}

const FieldRow = ({ label, id, expandable, children }: FieldRowProps) => (
  <div className="flex h-[35px] bg-[#b1b1b1] pl-[34px]">
    <div className="flex w-[187px] shrink-0 items-center gap-[14px] border-b border-r border-[#b1b1b1] bg-white pl-[4px]">
      {expandable && <span className="ml-[2px] flex"><Toggle label={label} /></span>}
      <label htmlFor={id}>{label}</label>
    </div>
    <div className="flex min-w-0 flex-1 items-center border-b border-[#b1b1b1] bg-white pl-[4px]">{children}</div>
  </div>
);

const SpinField = ({ id, value }: { id: string; value: string }) => (
  <>
    <input id={id} defaultValue={value} className="min-w-0 flex-1 outline-none" />
    <span className="flex w-[33px] flex-col">
      <button aria-label="Increase" className="flex h-[17px] items-center justify-center border border-[#adadad] bg-[#f0f0f0]">
        <svg width="10" height="6" viewBox="0 0 10 6"><path d="M0 6 H10 L5 0 Z" /></svg>
      </button>
      <button aria-label="Decrease" className="flex h-[17px] items-center justify-center border border-[#adadad] bg-[#f0f0f0]">
        <svg width="10" height="6" viewBox="0 0 10 6"><path d="M0 0 H10 L5 6 Z" /></svg>
      </button>
    </span>
  </>
);

const PropertyManager = () => {
  const [tab, setTab] = useState('Title');

  return (
    <div className="absolute left-[213px] top-[570px] flex h-[810px] w-[779px] flex-col border border-l-[#c4d2e2] border-t-[#a9bfd8] border-r-2 border-r-[#3c5a82] border-b-2 border-b-[#2c4a70] bg-[#b9cde5] p-[3px] pb-[2px] pt-[2px] text-black">
      <div className="flex h-[46px] shrink-0 items-center bg-linear-to-b from-[#afc3dc] to-[#c9dcf4] pl-[2px] pr-[9px] text-[#24395c]">
        <h2 className="mr-auto text-[25px] font-bold">Property Manager - Graph 1</h2>
        <button aria-label="Close Property Manager"><CloseGlyph /></button>
      </div>
      <div className="flex min-h-0 flex-1 flex-col bg-white">
        <div className="mb-[3px] flex h-[45px] shrink-0 items-end border-b border-[#d9d9d9] bg-[#f0f0f0]">
          {['Title', 'Line', 'Fill'].map((name) => (
            <button
              key={name}
              onClick={() => setTab(name)}
              className={
                name === tab
                  ? 'h-[45px] w-[103px] bg-white pb-0 pl-[16px] text-left'
                  : 'h-[42px] w-[93px] border-r border-t border-[#d9d9d9] pl-[10px] pt-1 text-left'
              }
            >
              {name}
            </button>
          ))}
        </div>
        <div className="flex min-h-0 flex-1 flex-col border-b-2 border-l border-t-2 border-[#6d6d6d]">
          <SectionRow name="Title Properties" />
          <FieldRow label="Text" id="prop-text">
            <input id="prop-text" className="min-w-0 flex-1 outline-none" />
            <button aria-label="Edit text" className="mr-[6px] flex h-[29px] w-[29px] items-center justify-center border-2 border-[#8a8a8a] border-r-[#222] bg-[#f4f4f4] font-['Liberation_Serif',serif] font-bold leading-none text-[#10105a]">
              Σ
            </button>
          </FieldRow>
          <FieldRow label="Font" expandable />
          <SectionRow name="Position" />
          <FieldRow label="Position" id="prop-position">
            <span className="grid h-full min-w-0 flex-1 items-center">
              <select id="prop-position" className="col-start-1 row-start-1 appearance-none outline-none">
                <option>Middle-top</option>
              </select>
              <span className="pointer-events-none col-start-1 row-start-1 flex h-[32px] w-[34px] items-center justify-center justify-self-end border border-[#adadad] bg-[#e3e3e3]">
                <svg width="14" height="10" viewBox="0 0 14 10"><path d="M1 1 L7 8 L13 1" fill="none" stroke="#444" strokeWidth="1.4" /></svg>
              </span>
            </span>
          </FieldRow>
          <FieldRow label="X offset" id="prop-x"><SpinField id="prop-x" value="0 in" /></FieldRow>
          <FieldRow label="Y offset" id="prop-y"><SpinField id="prop-y" value="0 in" /></FieldRow>
          <FieldRow label="Angle" id="prop-angle"><SpinField id="prop-angle" value="0 degrees" /></FieldRow>
          <SectionRow name="Background" />
          <FieldRow label="Line" expandable>[Invisible]</FieldRow>
          <FieldRow label="Fill" expandable>
            <button aria-label="Fill color" className="h-[33px] w-[141px] border border-black bg-white" />
          </FieldRow>
        </div>
        <div className="h-[4px] bg-[#f0f0f0]" />
        <div className="flex h-[37px] items-center border-2 border-x border-[#6d7580] bg-[#f0f0f0] pt-[2px] pl-[3px] font-bold">Title Properties</div>
      </div>
    </div>
  );
};

/* ---------- app ---------- */

const App = () => (
  <div className="relative flex h-screen min-w-[2600px] flex-col overflow-hidden bg-[#b9cde5] font-['Noto_Sans','Noto_Sans_CJK_SC',sans-serif] text-[24px] leading-[33px]">
    <Ribbon />
    <div className="flex min-h-0 flex-1 pt-[3px]">
      <ObjectManager />
      <DocumentArea />
      <WorksheetManager />
    </div>
    <footer className="flex h-[27px] shrink-0 overflow-hidden pt-[2px] text-[#0c1420]">
      <p className="mr-auto pl-[5px] pt-px text-[25px]">Click=select; drag=block select; shift+click=multi-select; ctrl+click=cycle selection</p>
      <p className="mr-[3px] h-[40px] w-[322px] border border-r-2 border-[#7b96b9] border-r-[#e3edf8] pl-px">Graph 1 selected</p>
      <p className="mr-[3px] h-[40px] w-[322px] border border-r-2 border-[#7b96b9] border-r-[#e3edf8] pl-px">x = 3.10 in, y = 9.28 in</p>
      <p className="h-[40px] w-[404px] border border-[#7b96b9] pl-px">6.89 in x 4.78 in</p>
    </footer>

    <PropertyManager />

    {/* collapsed outline handle on the left edge */}
    <button aria-label="Outline" className="absolute left-0 top-[1360px] flex h-[60px] w-[70px] items-center rounded-r-lg bg-black/20 pl-[17px]">
      <svg width="34" height="30" viewBox="0 0 34 30">
        <path d="M10 3 H33 M16 15 H33 M10 27 H33 M1 3 H5 M7 15 H11 M1 27 H5" stroke="#fff" strokeWidth="4" />
      </svg>
    </button>
  </div>
);

export default App;
